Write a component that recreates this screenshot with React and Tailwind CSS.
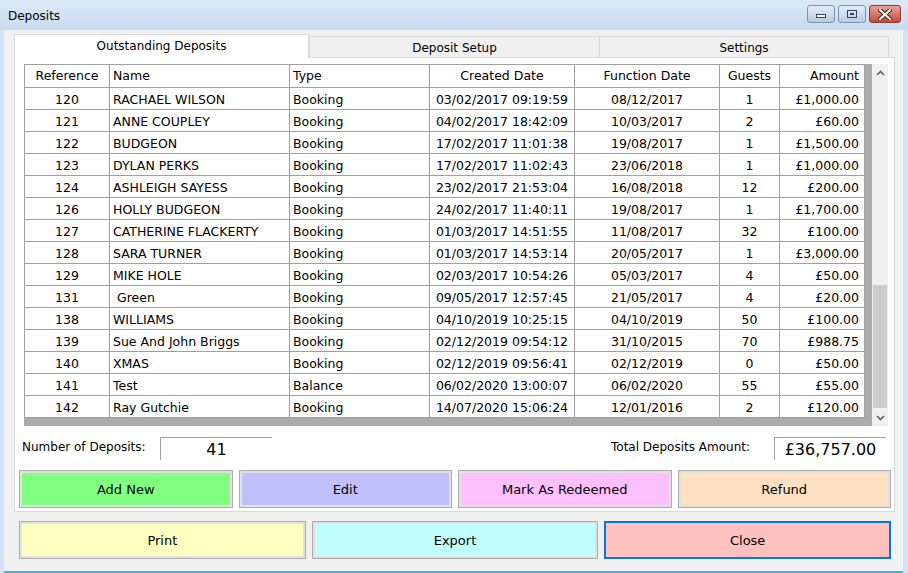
import { useState } from 'react'

const rows = [
  ['120', 'RACHAEL WILSON', 'Booking', '03/02/2017 09:19:59', '08/12/2017', '1', '£1,000.00'],
  ['121', 'ANNE COUPLEY', 'Booking', '04/02/2017 18:42:09', '10/03/2017', '2', '£60.00'],
  ['122', 'BUDGEON', 'Booking', '17/02/2017 11:01:38', '19/08/2017', '1', '£1,500.00'],
  ['123', 'DYLAN PERKS', 'Booking', '17/02/2017 11:02:43', '23/06/2018', '1', '£1,000.00'],
  ['124', 'ASHLEIGH SAYESS', 'Booking', '23/02/2017 21:53:04', '16/08/2018', '12', '£200.00'],
  ['126', 'HOLLY BUDGEON', 'Booking', '24/02/2017 11:40:11', '19/08/2017', '1', '£1,700.00'],
  ['127', 'CATHERINE FLACKERTY', 'Booking', '01/03/2017 14:51:55', '11/08/2017', '32', '£100.00'],
  ['128', 'SARA TURNER', 'Booking', '01/03/2017 14:53:14', '20/05/2017', '1', '£3,000.00'],
  ['129', 'MIKE HOLE', 'Booking', '02/03/2017 10:54:26', '05/03/2017', '4', '£50.00'],
  ['131', '\u00a0Green', 'Booking', '09/05/2017 12:57:45', '21/05/2017', '4', '£20.00'],
  ['138', 'WILLIAMS', 'Booking', '04/10/2019 10:25:15', '04/10/2019', '50', '£100.00'],
  ['139', 'Sue And John Briggs', 'Booking', '02/12/2019 09:54:12', '31/10/2015', '70', '£988.75'],
  ['140', 'XMAS', 'Booking', '02/12/2019 09:56:41', '02/12/2019', '0', '£50.00'],
  ['141', 'Test', 'Balance', '06/02/2020 13:00:07', '06/02/2020', '55', '£55.00'],
  ['142', 'Ray Gutchie', 'Booking', '14/07/2020 15:06:24', '12/01/2016', '2', '£120.00'],
]

// column widths + alignment, in the order of the grid
const cols = [
  { title: 'Reference', w: 'w-[85px]', align: 'justify-center' },
  { title: 'Name', w: 'w-[180px]', align: 'justify-start pl-[3px]' },
  { title: 'Type', w: 'w-[140px]', align: 'justify-start pl-[3px]' },
  { title: 'Created Date', w: 'w-[145px]', align: 'justify-center' },
  { title: 'Function Date', w: 'w-[145px]', align: 'justify-center' },
  { title: 'Guests', w: 'w-[60px]', align: 'justify-center' },
  { title: 'Amount', w: 'w-[85px]', align: 'justify-end pr-[5px]' },
]

function WinButton({ children, className, inner = 'border border-[#adadad] p-[2px] bg-[#e1e1e1]' }) {
  return (
    <button className={`h-[38px] ${inner} flex`}>
      <span className={`flex-1 flex items-center justify-center pt-[1px] text-[13px] text-black ${className}`}>
        {children}
      </span>
    </button>
  )
}

export default function App() {
  const [tab, setTab] = useState(0)
  const tabs = ['Outstanding Deposits', 'Deposit Setup', 'Settings']

  return (
    <div
      className="w-[908px] h-[573px] flex flex-col bg-[#d4e3f4] overflow-hidden"
      style={{ fontFamily: '"DejaVu Sans", sans-serif' }}
    >
      {/* Title bar */}
      <div className="h-[30px] flex items-start shrink-0 bg-gradient-to-b from-[#dce8f6] to-[#c9dbf0]">
        <div className="pl-[8px] pt-[7px] text-[12px] text-black">Deposits</div>
        <div className="ml-auto flex gap-[3px] pt-[5px] pr-[7px]">
          <div className="w-[28px] h-[18px] rounded-[3px] border border-[#7f93ad] bg-gradient-to-b from-[#e4ecf6] to-[#b9cbe2] flex items-center justify-center">
            <div className="w-[10px] h-[4px] mt-[3px] border border-[#34465e] bg-white"></div>
          </div>
          <div className="w-[28px] h-[18px] rounded-[3px] border border-[#7f93ad] bg-gradient-to-b from-[#e4ecf6] to-[#b9cbe2] flex items-center justify-center">
            <div className="w-[10px] h-[8px] border border-[#34465e] flex items-center justify-center">
              <div className="w-[4px] h-[2px] border border-[#34465e]"></div>
            </div>
          </div>
          <div className="w-[32px] h-[18px] rounded-[3px] border border-[#8c3a32] bg-gradient-to-b from-[#e8a395] to-[#c4473a] flex items-center justify-center">
            <svg width="14" height="11" viewBox="0 0 14 11">
              <path d="M2 1 L12 10 M12 1 L2 10" stroke="#3a1a16" strokeWidth="4" strokeLinecap="square" />
              <path d="M2 1 L12 10 M12 1 L2 10" stroke="#ffffff" strokeWidth="2.2" strokeLinecap="square" />
            </svg>
          </div>
        </div>
      </div>

      {/* Body */}
      <div className="flex-1 ml-[4px] mr-[5px] bg-[#f0f0f0] border-b-[2px] border-[#2fb7e4] pl-[10px] pr-[8px] pt-[4px] flex flex-col">
        {/* Tab headers */}
        <div className="flex items-end h-[23px] pr-[6px]">
          {tabs.map((t, i) =>
            i === tab ? (
              <button
                key={t}
                onClick={() => setTab(i)}
                className="w-[295px] h-[24px] -mb-[1px] bg-white border border-b-0 border-[#d9d9d9] text-[12px] text-black relative z-10 pb-[1px]"
              >
                {t}
              </button>
            ) : (
              <button
                key={t}
                onClick={() => setTab(i)}
                className={`${i === 1 ? 'w-[290px]' : 'flex-1'} h-[21px] pt-[1px] bg-[#f0f0f0] border border-b-0 border-[#d9d9d9] ${i === 1 ? 'border-r-0' : ''} text-[12px] text-black`}
              >
                {t}
              </button>
            )
          )}
        </div>

        {/* Tab panel */}
        <div className="w-[881px] h-[455px] bg-white border border-[#d9d9d9] flex flex-col pt-[6px] pl-[9px] pr-[6px]">
          {/* Grid */}
          <div className="flex h-[362px]">
            <div className="w-[848px] bg-[#ababab] flex flex-col">
              <div className="flex h-[24px] bg-white border-t border-l border-[#a0a0a0] w-[841px]">
                {cols.map((c) => (
                  <div
                    key={c.title}
                    className={`${c.w} shrink-0 flex items-center pt-[1px] ${c.align} border-r border-b border-[#a0a0a0] text-[12.5px] text-black`}
                  >
                    {c.title}
                  </div>
                ))}
              </div>
              {rows.map((r) => (
                <div key={r[0]} className="flex h-[22px] bg-white border-l border-[#a0a0a0] w-[841px]">
                  {r.map((v, j) => (
                    <div
                      key={j}
                      className={`${cols[j].w} shrink-0 flex items-center pt-[3px] ${cols[j].align} border-r border-b border-[#a0a0a0] text-[12.5px] text-black whitespace-pre`}
                    >
                      {v}
                    </div>
                  ))}
                </div>
              ))}
            </div>
            {/* Scrollbar */}
            <div className="w-[16px] bg-[#f0f0f0] flex flex-col items-center">
              <div className="h-[17px] flex items-center justify-center">
                <svg width="9" height="6" viewBox="0 0 9 6">
                  <path d="M1 5 L4.5 1.5 L8 5" fill="none" stroke="#606060" strokeWidth="1.6" />
                </svg>
              </div>
              <div className="flex-1 w-full flex flex-col px-[1px]">
                <div className="h-[204px]"></div>
                <div className="h-[123px] bg-[#cdcdcd]"></div>
              </div>
              <div className="h-[17px] flex items-center justify-center">
                <svg width="9" height="6" viewBox="0 0 9 6">
                  <path d="M1 1 L4.5 4.5 L8 1" fill="none" stroke="#606060" strokeWidth="1.6" />
                </svg>
              </div>
            </div>
          </div>

          {/* Totals */}
          <div className="flex items-start h-[33px] mt-[11px]">
            <div className="-ml-[2px] w-[138px] pt-[1px] text-[12px] text-black">Number of Deposits:</div>
            <div className="w-[112px] h-[23px] border-t border-l border-[#a0a0a0] flex items-center justify-center pt-[1px] text-[16px] text-black">
              41
            </div>
            <div className="ml-auto pt-[1px] text-[12px] text-black">Total Deposits Amount:</div>
            <div className="ml-[24px] mr-[2px] w-[112px] h-[23px] border-t border-l border-[#a0a0a0] flex items-center justify-center pt-[1px] text-[16px] text-black">
              £36,757.00
            </div>
          </div>

          {/* Action buttons */}
          <div className="grid grid-cols-4 gap-[6px] -ml-[5px] -mr-[3px]">
            <WinButton className="bg-[#80ff80]">Add New</WinButton>
            <WinButton className="bg-[#c0c0ff]">Edit</WinButton>
            <WinButton className="bg-[#ffc0ff]">Mark As Redeemed</WinButton>
            <WinButton className="bg-[#ffe0c0]">Refund</WinButton>
          </div>
        </div>

        {/* Bottom buttons */}
        <div className="grid grid-cols-3 gap-[6px] mt-[9px] ml-[5px] mr-[4px]">
          <WinButton className="bg-[#ffffc0]">Print</WinButton>
          <WinButton className="bg-[#c0ffff]">Export</WinButton>
          <WinButton className="bg-[#ffc0c0]" inner="border-2 border-[#0078d7] p-[1px] bg-[#ffc0c0]">
            Close
          </WinButton>
        </div>
      </div>
    </div>
  )
}
